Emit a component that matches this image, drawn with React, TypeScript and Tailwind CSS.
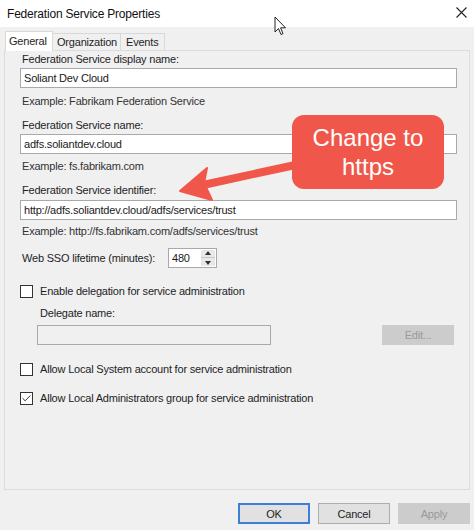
import { Check } from "lucide-react";

const font = "font-['Segoe_UI','Liberation_Sans',Arial,sans-serif]";

function TextBox({ value, className = "" }: { value?: string; className?: string }) {
  return (
    <div className={`h-[20px] bg-white border border-[#a9a9a9] flex items-center pl-[3px] text-[#1a1a1a] whitespace-nowrap ${className}`}>
      {value}
    </div>
  );
}

function CheckRow({ label, checked = false, className = "" }: { label: string; checked?: boolean; className?: string }) {
  return (
    <div className={`flex items-center h-[16px] pl-[15px] ${className}`}>
      <div className="w-[13px] h-[13px] border border-[#333] bg-white flex items-center justify-center">
        {checked && <Check className="w-[11px] h-[11px] text-[#222]" strokeWidth={2} />}
      </div>
      <span className="ml-[7px] whitespace-nowrap">{label}</span>
    </div>
  );
}

export default function App() {
  return (
    <div className={`relative w-[474px] h-[530px] overflow-hidden bg-[#f0f0f0] flex flex-col text-[11px] tracking-[-0.2px] leading-[16px] text-[#1e1e1e] ${font}`}>
      {/* Title bar */}
      <div className="h-[27px] bg-white flex items-center justify-between pl-[7px] pr-[7px] shrink-0">
        <span className="text-[12px] text-[#111]">Federation Service Properties</span>
        <svg width="11" height="11" viewBox="0 0 11 11" className="mt-[-2px]">
          <path d="M0.5 0.5 L10.5 10.5 M10.5 0.5 L0.5 10.5" stroke="#222" strokeWidth="1.1" />
        </svg>
      </div>

      {/* Tabs */}
      <div className="flex items-end h-[23px] pl-[5px] shrink-0">
        <div className="w-[48px] h-[20px] pl-[3px] bg-white border border-b-0 border-[#d9d9d9] leading-[18px] relative z-10 mb-[-1px]">General</div>
        <div className="w-[68px] h-[17px] pl-[4px] bg-[#f0f0f0] border border-b-0 border-l-0 border-[#d9d9d9] leading-[16px]">Organization</div>
        <div className="w-[44px] h-[17px] pl-[5px] bg-[#f0f0f0] border border-b-0 border-l-0 border-[#d9d9d9] leading-[16px]">Events</div>
      </div>

      {/* Panel */}
      <div className="mx-[4px] h-[440px] shrink-0 border border-[#dcdcdc] bg-[#f0f0f1] flex flex-col pr-[12px]">
        <div className="pl-[17px] h-[16px]">Federation Service display name:</div>
        <TextBox value="Soliant Dev Cloud" className="ml-[15px] mt-[1px]" />
        <div className="pl-[17px] h-[16px] mt-[5px] text-[#333]">Example: Fabrikam Federation Service</div>

        <div className="pl-[17px] h-[16px] mt-[8px]">Federation Service name:</div>
        <TextBox value="adfs.soliantdev.cloud" className="ml-[15px] mt-[1px]" />
        <div className="pl-[17px] h-[16px] mt-[4px] text-[#333]">Example: fs.fabrikam.com</div>

        <div className="pl-[17px] h-[16px] mt-[8px]">Federation Service identifier:</div>
        <TextBox value="http://adfs.soliantdev.cloud/adfs/services/trust" className="ml-[15px] mt-[2px]" />
        <div className="pl-[17px] h-[16px] mt-[3px] text-[#333]">Example: http://fs.fabrikam.com/adfs/services/trust</div>

        <div className="flex items-center h-[20px] mt-[9px] pl-[17px]">
          <span className="w-[146px] whitespace-nowrap">Web SSO lifetime (minutes):</span>
          <div className="w-[49px] h-[20px] bg-white border border-[#a9a9a9] flex items-center">
            <span className="pl-[3px] flex-1">480</span>
            <div className="w-[14px] h-[16px] mr-[1px] bg-[#e8e8e8] flex flex-col items-center justify-around">
              <svg width="6" height="4" viewBox="0 0 6 4"><path d="M0 4 L3 0 L6 4 Z" fill="#333" /></svg>
              <div className="w-full h-px bg-[#c8c8c8]" />
              <svg width="6" height="4" viewBox="0 0 6 4"><path d="M0 0 L3 4 L6 0 Z" fill="#333" /></svg>
            </div>
          </div>
        </div>

        <CheckRow label="Enable delegation for service administration" className="mt-[15px]" />
        <div className="pl-[35px] h-[16px] mt-[6px]">Delegate name:</div>
        <div className="flex items-center justify-between h-[20px] mt-[4px] pl-[32px]">
          <div className="w-[234px] h-[20px] bg-[#f0f0f0] border border-[#a9a9a9]" />
          <div className="w-[72px] h-[20px] bg-[#cccccc] text-[#9a9a9a] flex items-center justify-center mr-[3px]">Edit...</div>
        </div>

        <CheckRow label="Allow Local System account for service administration" className="mt-[16px]" />
        <CheckRow label="Allow Local Administrators group for service administration" checked className="mt-[13px]" />
      </div>

      {/* Buttons */}
      <div className="flex justify-end gap-[8px] pr-[4px] mt-[13px]">
        <div className="w-[72px] h-[21px] bg-[#e1e1e1] border-2 border-[#3b7fd6] flex items-center justify-center">OK</div>
        <div className="w-[72px] h-[21px] bg-[#e1e1e1] border border-[#adadad] flex items-center justify-center">Cancel</div>
        <div className="w-[72px] h-[21px] bg-[#cccccc] text-[#9a9a9a] flex items-center justify-center">Apply</div>
      </div>

      {/* Callout arrow */}
      <svg className="absolute left-0 top-0 pointer-events-none" width="474" height="530" viewBox="0 0 474 530">
        <path d="M203 185 L300 164" stroke="#f0574a" strokeWidth="8" strokeLinecap="round" />
        <path d="M180 191 L207 168 L204 183 L212 200 Z" fill="#f0574a" stroke="#f0574a" strokeWidth="2" strokeLinejoin="round" />
      </svg>
      <div className="absolute left-[292px] top-[115px] w-[152px] h-[74px] rounded-[12px] bg-[#f0574a] text-white flex flex-col items-center justify-center font-['Liberation_Sans',Arial,sans-serif] text-[24px] leading-[29px] tracking-normal">
        <span>Change to</span>
        <span>https</span>
      </div>

      {/* Mouse cursor */}
      <svg className="absolute left-[274px] top-[16px]" width="14" height="21" viewBox="0 0 14 21">
        <path d="M1 1 L1 16 L4.5 12.5 L7 18.5 L9 17.6 L6.6 11.8 L11.5 11.8 Z" fill="white" stroke="#222" strokeWidth="1" strokeLinejoin="round" />
      </svg>
    </div>
  );
}
